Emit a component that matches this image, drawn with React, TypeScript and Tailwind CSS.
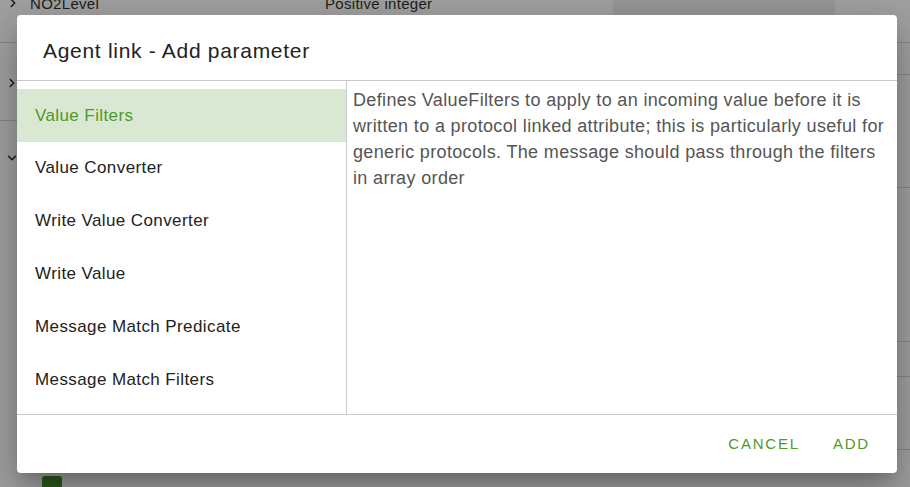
import { ChevronDown, ChevronRight } from "lucide-react";

const items = [
  "Value Filters",
  "Value Converter",
  "Write Value Converter",
  "Write Value",
  "Message Match Predicate",
  "Message Match Filters",
];

const App = () => {
  return (
    <div
      className="relative w-[910px] h-[487px] overflow-hidden bg-[#a1a1a1] text-[#1e1e1e]"
      style={{ fontFamily: '"Liberation Sans", Arial, sans-serif' }}
    >
      {/* page behind the overlay */}
      <div className="flex flex-col h-full">
        <div className="flex h-[43px] border-b border-[#858585] text-[15px]">
          <div className="flex items-start -mt-[7px] pl-[6px] w-[325px]">
            <ChevronRight className="w-[14px] h-[14px] mt-[3px] text-[#1a1a1a]" strokeWidth={2.5} />
            <span className="ml-[10px] tracking-[0.3px]">NO2Level</span>
          </div>
          <div className="-mt-[7px] w-[288px] tracking-[0.3px]">Positive integer</div>
          <div className="w-[222px] h-full bg-[#979797]" />
        </div>
        <div className="flex flex-1">
          <div className="flex-1 flex flex-col">
            <div className="h-[78px] border-b border-[#858585] flex items-center pl-[5px] pt-[2px]">
              <ChevronRight className="w-[14px] h-[14px] text-[#1a1a1a]" strokeWidth={2.5} />
            </div>
            <div className="flex-1 flex flex-col pl-[5px] pt-[30px]">
              <ChevronDown className="w-[14px] h-[14px] text-[#1a1a1a]" strokeWidth={2.5} />
              <div className="flex-1" />
              <div className="flex items-center gap-[10px] pl-[37px] h-[14px]">
                <div className="w-[20px] h-[20px] mt-[12px] rounded-[3px] bg-[#2f5a1e]" />
              </div>
            </div>
          </div>
          <div className="w-[13px] flex flex-col">
            <div className="h-[32px] border-b border-[#858585]" />
            <div className="h-[113px] border-b border-[#858585]" />
            <div className="h-[154px] border-b border-[#858585]" />
            <div className="h-[35px] border-b border-[#858585]" />
            <div className="h-[73px] border-b border-[#858585]" />
          </div>
        </div>
      </div>

      {/* dialog */}
      <div className="absolute left-[17px] top-[15px] w-[880px] h-[458px] bg-white rounded-[4px] shadow-[0_11px_15px_-7px_rgba(0,0,0,0.2),0_24px_38px_3px_rgba(0,0,0,0.14),0_9px_46px_8px_rgba(0,0,0,0.12)] flex flex-col">
        <div className="h-[65px] pl-[26px] pt-[24px] text-[21px] leading-[24px] tracking-[0.7px] text-[#222]">
          Agent link - Add parameter
        </div>
        <div className="flex h-[335px] border-t border-b border-[#cbcbcb]">
          <div className="w-[330px] border-r border-[#cbcbcb] pt-[8px]">
            {items.map((it, i) => (
              <div
                key={it}
                className={
                  i === 0
                    ? "h-[52.8px] flex items-center pl-[18px] text-[17px] tracking-[0.4px] bg-[#d9e8d3] text-[#4c9a2a]"
                    : "h-[52.8px] flex items-center pl-[18px] text-[17px] tracking-[0.4px] text-[#222]"
                }
              >
                {it}
              </div>
            ))}
          </div>
          <div className="flex-1 pl-[6px] pt-[6px] text-[18px] leading-[26px] tracking-[0.35px] whitespace-nowrap text-[#555]">
            Defines ValueFilters to apply to an incoming value before it is
            <br />
            written to a protocol linked attribute; this is particularly useful for
            <br />
            generic protocols. The message should pass through the filters
            <br />
            in array order
          </div>
        </div>
        <div className="flex-1 flex items-center justify-end gap-[17px] pr-[19px] pt-[1px]">
          <button className="px-[8px] text-[15px] tracking-[1.8px] text-[#4c9a2a]">CANCEL</button>
          <button className="px-[8px] text-[15px] tracking-[1.8px] text-[#4c9a2a]">ADD</button>
        </div>
      </div>
    </div>
  );
};

export default App;
